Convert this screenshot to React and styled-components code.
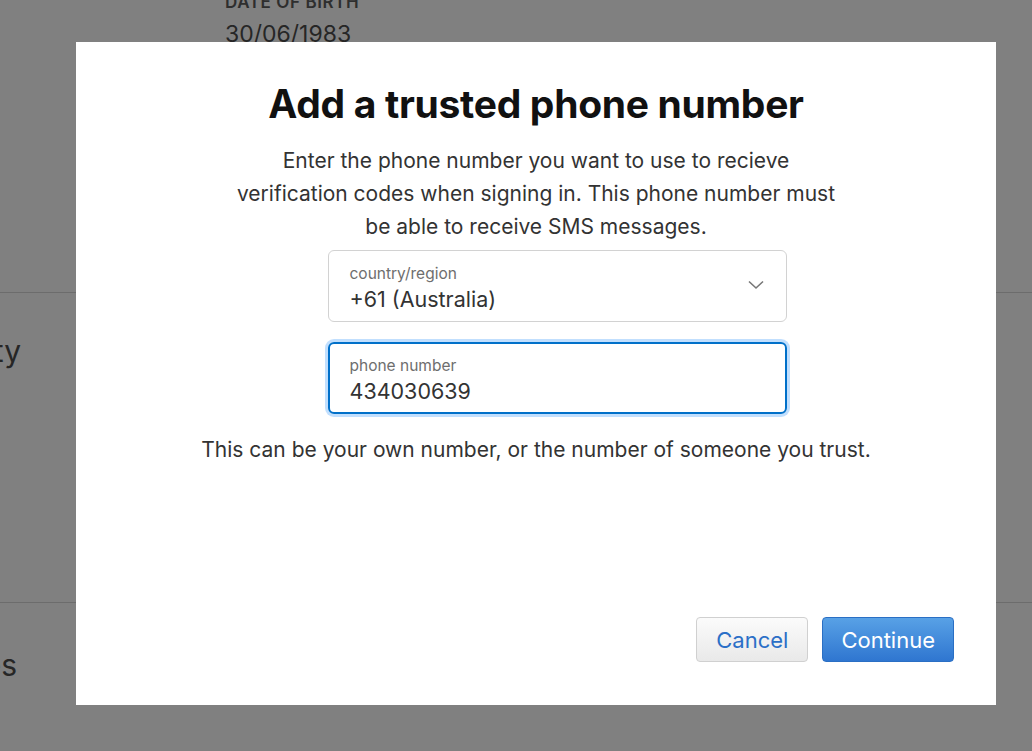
import styled, { createGlobalStyle } from "styled-components"

const GlobalStyle = createGlobalStyle`
  html, body {
    margin: 0;
    padding: 0;
    overflow: hidden;
  }
  body {
    font-family: Inter, "Liberation Sans", Arial, sans-serif;
    background: #808080;
  }
`

const Page = styled.div`
  position: relative;
  width: 1032px;
  height: 751px;
  background: #808080;
  overflow: hidden;
`

const BgTop = styled.div`
  display: flow-root;
  height: 293px;
  padding-left: 225px;
  box-sizing: border-box;
  border-bottom: 1px solid #6c6c6c;
`

const BgLabel = styled.div`
  margin-top: -9px;
  font-size: 17px;
  font-weight: 600;
  letter-spacing: 0.6px;
  color: #2e2e2e;
  line-height: 22px;
`

const BgValue = styled.div`
  margin-top: 7px;
  font-size: 23px;
  color: #262626;
  line-height: 28px;
`

const BgRow = styled.div`
  display: flex;
  height: ${(p) => p.$h}px;
  border-bottom: ${(p) => (p.$line ? "1px solid #6c6c6c" : "none")};
  box-sizing: border-box;
`

const BgEdge = styled.div`
  width: ${(p) => p.$w}px;
  display: flex;
  justify-content: flex-end;
  padding-top: ${(p) => p.$top}px;
  font-size: 30px;
  color: #262626;
  white-space: nowrap;
  line-height: 36px;
`

const Modal = styled.div`
  position: absolute;
  left: 76px;
  top: 42px;
  width: 920px;
  height: 663px;
  background: #fff;
  box-sizing: border-box;
  padding: 36px 42px 43px;
  display: flex;
  flex-direction: column;
  align-items: center;
`

const Title = styled.h1`
  margin: 0;
  font-size: 39px;
  font-weight: 700;
  color: #111;
  line-height: 52px;
  letter-spacing: -0.3px;
`

const Intro = styled.p`
  margin: 14px 0 0;
  width: 620px;
  font-size: 21px;
  line-height: 33px;
  color: #333;
  text-align: center;
`

const Field = styled.div`
  margin-top: ${(p) => p.$mt}px;
  margin-left: 42px;
  width: 459px;
  height: 72px;
  box-sizing: border-box;
  border-radius: 6px;
  border: ${(p) => (p.$focus ? "2px solid #0070c9" : "1px solid #d2d2d2")};
  box-shadow: ${(p) => (p.$focus ? "0 0 0 3px rgba(131, 192, 253, 0.5)" : "none")};
  padding: ${(p) => (p.$focus ? "13px 20px 0" : "14px 21px 0")};
  display: flex;
  align-items: flex-start;
  justify-content: space-between;
`

const FieldText = styled.div`
  display: flex;
  flex-direction: column;
`

const FieldLabel = styled.span`
  font-size: 15.5px;
  line-height: 18px;
  color: #6e6e6e;
`

const FieldValue = styled.span`
  margin-top: 3px;
  font-size: 21.5px;
  line-height: 26px;
  color: #333;
`

const Chevron = styled.svg`
  margin-top: 15px;
  margin-right: 1px;
  width: 16px;
  height: 10px;
`

const Hint = styled.p`
  margin: 21px 0 0;
  font-size: 21px;
  line-height: 30px;
  color: #333;
  text-align: center;
`

const Actions = styled.div`
  margin-top: auto;
  align-self: flex-end;
  display: flex;
  gap: 14px;
`

const Button = styled.button`
  height: 45px;
  padding: 0 ${(p) => (p.$primary ? 18 : 19)}px;
  border-radius: 4px;
  font-family: inherit;
  font-size: 22px;
  cursor: pointer;
  border: 1px solid ${(p) => (p.$primary ? "#2a6fc4" : "#d0d0d0")};
  color: ${(p) => (p.$primary ? "#fff" : "#2b6fc7")};
  background: ${(p) =>
    p.$primary
      ? "linear-gradient(#58a1e6, #2f76d0)"
      : "linear-gradient(#fbfbfb, #e9e9e9)"};
`

export default function App() {
  return (
    <Page>
      <GlobalStyle />
      <BgTop>
        <BgLabel>DATE OF BIRTH</BgLabel>
        <BgValue>30/06/1983</BgValue>
      </BgTop>
      <BgRow $h={310} $line>
        <BgEdge $w={21} $top={40}>Security</BgEdge>
      </BgRow>
      <BgRow $h={148}>
        <BgEdge $w={17} $top={44}>Devices</BgEdge>
      </BgRow>

      <Modal>
        <Title>Add a trusted phone number</Title>
        <Intro>
          Enter the phone number you want to use to recieve verification codes
          when signing in. This phone number must be able to receive SMS
          messages.
        </Intro>
        <Field $mt={7}>
          <FieldText>
            <FieldLabel>country/region</FieldLabel>
            <FieldValue>+61 (Australia)</FieldValue>
          </FieldText>
          <Chevron viewBox="0 0 16 10">
            <path d="M1 1.5 L8 8 L15 1.5" fill="none" stroke="#777" strokeWidth="1.6" />
          </Chevron>
        </Field>
        <Field $mt={20} $focus>
          <FieldText>
            <FieldLabel>phone number</FieldLabel>
            <FieldValue>434030639</FieldValue>
          </FieldText>
        </Field>
        <Hint>This can be your own number, or the number of someone you trust.</Hint>
        <Actions>
          <Button>Cancel</Button>
          <Button $primary>Continue</Button>
        </Actions>
      </Modal>
    </Page>
  )
}
